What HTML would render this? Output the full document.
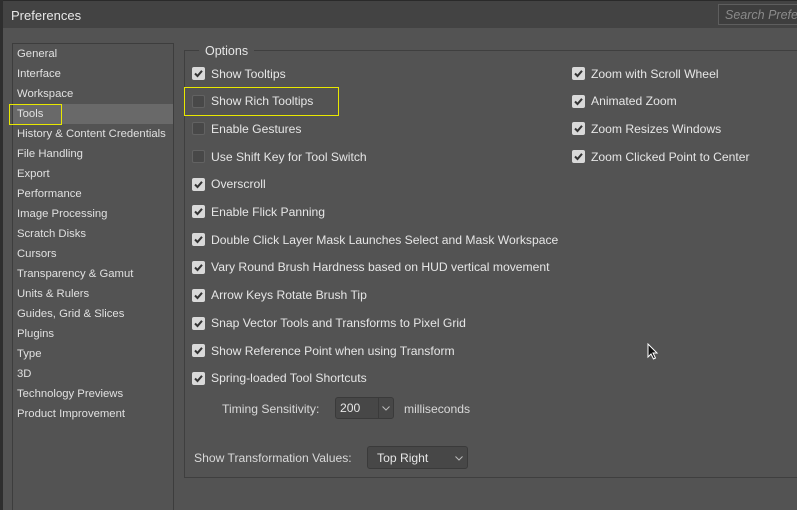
<!DOCTYPE html>
<html style="overflow:hidden"><head><style>
*{margin:0;padding:0;box-sizing:border-box}
html,body{width:797px;height:510px;overflow:hidden}
body{background:#535353;font-family:"Liberation Sans",Arial,sans-serif;font-size:12px;color:#e6e6e6;position:relative}
.a{position:absolute;white-space:nowrap}
.nav{position:absolute;left:17px;font-size:11.3px;color:#e0e0e0}
.cb{position:absolute;width:13px;height:13px;border-radius:2px}
.on{background:#d9d9d9}
.off{background:#484848;border:1px solid #626262}
.lbl{position:absolute;font-size:12.15px;color:#e6e6e6;white-space:nowrap}
</style></head><body>
<div class="a" style="left:0;top:0;width:797px;height:28px;background:#434343;border-top:1px solid #2a2a2a"></div>
<div class="a" style="left:0;top:0;width:3px;height:510px;background:#2e2e2e"></div>
<div class="a" style="left:11px;top:8px;font-size:13px;color:#e8e8e8">Preferences</div>
<div class="a" style="left:718px;top:4px;width:85px;height:21px;border:1px solid #5e5e5e;background:#3e3e3e"></div>
<div class="a" style="left:725px;top:8px;font-size:12.5px;font-style:italic;color:#8a8a8a">Search Prefer</div>

<div class="a" style="left:12px;top:43px;width:162px;height:480px;border:1px solid #3d3d3d"></div>
<div class="a" style="left:13px;top:104px;width:160px;height:20px;background:#696969"></div>
<div class="a" style="left:9px;top:104px;width:53px;height:21px;border:1px solid #e8e800"></div>
<div class="nav" style="top:48px">General</div>
<div class="nav" style="top:68px">Interface</div>
<div class="nav" style="top:88px">Workspace</div>
<div class="nav" style="top:108px">Tools</div>
<div class="nav" style="top:128px">History &amp; Content Credentials</div>
<div class="nav" style="top:148px">File Handling</div>
<div class="nav" style="top:168px">Export</div>
<div class="nav" style="top:188px">Performance</div>
<div class="nav" style="top:208px">Image Processing</div>
<div class="nav" style="top:228px">Scratch Disks</div>
<div class="nav" style="top:248px">Cursors</div>
<div class="nav" style="top:268px">Transparency &amp; Gamut</div>
<div class="nav" style="top:288px">Units &amp; Rulers</div>
<div class="nav" style="top:308px">Guides, Grid &amp; Slices</div>
<div class="nav" style="top:328px">Plugins</div>
<div class="nav" style="top:348px">Type</div>
<div class="nav" style="top:368px">3D</div>
<div class="nav" style="top:388px">Technology Previews</div>
<div class="nav" style="top:408px">Product Improvement</div>

<div class="a" style="left:184px;top:50px;width:620px;height:428px;border:1px solid #3f3f3f"></div>
<div class="a" style="left:199px;top:44px;padding:0 6px;background:#535353;font-size:12.5px">Options</div>
<div class="a" style="left:184px;top:87px;width:155px;height:29px;border:1px solid #e8e800"></div>

<svg width="0" height="0" style="position:absolute"><defs><symbol id="ck" viewBox="0 0 13 13"><path d="M3 6.5 L5.5 9 L10 3.8" fill="none" stroke="#333" stroke-width="2"/></symbol></defs></svg>

<div class="cb on" style="left:192px;top:67px"><svg width="13" height="13"><use href="#ck"/></svg></div><div class="lbl" style="left:211px;top:67px">Show Tooltips</div>
<div class="cb off" style="left:192px;top:95px"></div><div class="lbl" style="left:211px;top:94px">Show Rich Tooltips</div>
<div class="cb off" style="left:192px;top:122px"></div><div class="lbl" style="left:211px;top:122px">Enable Gestures</div>
<div class="cb off" style="left:192px;top:150px"></div><div class="lbl" style="left:211px;top:150px">Use Shift Key for Tool Switch</div>
<div class="cb on" style="left:192px;top:178px"><svg width="13" height="13"><use href="#ck"/></svg></div><div class="lbl" style="left:211px;top:177px">Overscroll</div>
<div class="cb on" style="left:192px;top:205px"><svg width="13" height="13"><use href="#ck"/></svg></div><div class="lbl" style="left:211px;top:205px">Enable Flick Panning</div>
<div class="cb on" style="left:192px;top:233px"><svg width="13" height="13"><use href="#ck"/></svg></div><div class="lbl" style="left:211px;top:233px">Double Click Layer Mask Launches Select and Mask Workspace</div>
<div class="cb on" style="left:192px;top:261px"><svg width="13" height="13"><use href="#ck"/></svg></div><div class="lbl" style="left:211px;top:260px">Vary Round Brush Hardness based on HUD vertical movement</div>
<div class="cb on" style="left:192px;top:289px"><svg width="13" height="13"><use href="#ck"/></svg></div><div class="lbl" style="left:211px;top:288px">Arrow Keys Rotate Brush Tip</div>
<div class="cb on" style="left:192px;top:317px"><svg width="13" height="13"><use href="#ck"/></svg></div><div class="lbl" style="left:211px;top:316px">Snap Vector Tools and Transforms to Pixel Grid</div>
<div class="cb on" style="left:192px;top:344px"><svg width="13" height="13"><use href="#ck"/></svg></div><div class="lbl" style="left:211px;top:344px">Show Reference Point when using Transform</div>
<div class="cb on" style="left:192px;top:372px"><svg width="13" height="13"><use href="#ck"/></svg></div><div class="lbl" style="left:211px;top:371px">Spring-loaded Tool Shortcuts</div>

<div class="cb on" style="left:572px;top:67px"><svg width="13" height="13"><use href="#ck"/></svg></div><div class="lbl" style="left:591px;top:67px">Zoom with Scroll Wheel</div>
<div class="cb on" style="left:572px;top:95px"><svg width="13" height="13"><use href="#ck"/></svg></div><div class="lbl" style="left:591px;top:94px">Animated Zoom</div>
<div class="cb on" style="left:572px;top:122px"><svg width="13" height="13"><use href="#ck"/></svg></div><div class="lbl" style="left:591px;top:122px">Zoom Resizes Windows</div>
<div class="cb on" style="left:572px;top:150px"><svg width="13" height="13"><use href="#ck"/></svg></div><div class="lbl" style="left:591px;top:150px">Zoom Clicked Point to Center</div>

<div class="lbl" style="left:222px;top:402px;color:#d8d8d8">Timing Sensitivity:</div>
<div class="a" style="left:335px;top:397px;width:59px;height:22px;border:1px solid #3a3a3a;border-radius:3px;background:#474747"></div>
<div class="a" style="left:378px;top:398px;width:1px;height:20px;background:#3a3a3a"></div>
<div class="lbl" style="left:340px;top:401px">200</div>
<svg class="a" style="left:381px;top:404px" width="10" height="8"><path d="M1.5 2.5 L5 6 L8.5 2.5" fill="none" stroke="#bbb" stroke-width="1"/></svg>
<div class="lbl" style="left:404px;top:402px;color:#d8d8d8">milliseconds</div>

<div class="lbl" style="left:194px;top:451px;color:#d8d8d8">Show Transformation Values:</div>
<div class="a" style="left:367px;top:446px;width:101px;height:23px;border:1px solid #3a3a3a;border-radius:3px;background:#474747"></div>
<div class="lbl" style="left:377px;top:451px">Top Right</div>
<svg class="a" style="left:454px;top:454px" width="10" height="8"><path d="M1.5 2.5 L5 6 L8.5 2.5" fill="none" stroke="#bbb" stroke-width="1"/></svg>

<svg class="a" style="left:647px;top:343px" width="12" height="18"><path d="M1 1 L1 14 L4 11 L6.5 16 L8.5 15 L6 10 L10 10 Z" fill="#111" stroke="#fff" stroke-width="1"/></svg>
</body></html>
